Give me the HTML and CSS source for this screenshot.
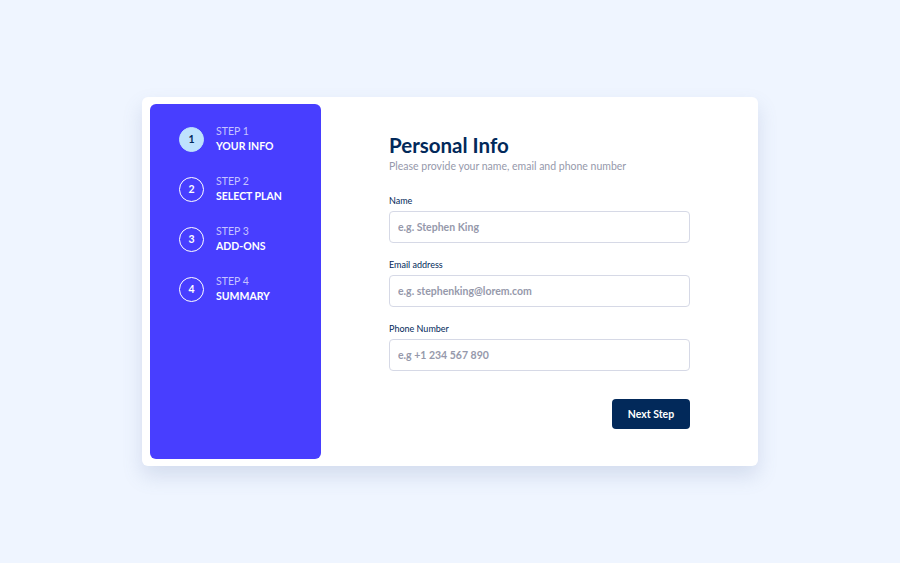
FILE: index.html
```html
<!DOCTYPE html>
<html lang="en">
<head>
<meta charset="utf-8">
<title>Multi-step form</title>
<link rel="stylesheet" href="styles.css">
</head>
<body>
<div class="card">
  <aside class="sidebar">
    <div class="step">
      <span class="num active">1</span>
      <div class="step-text"><span class="step-label">STEP 1</span><span class="step-name">YOUR INFO</span></div>
    </div>
    <div class="step">
      <span class="num">2</span>
      <div class="step-text"><span class="step-label">STEP 2</span><span class="step-name">SELECT PLAN</span></div>
    </div>
    <div class="step">
      <span class="num">3</span>
      <div class="step-text"><span class="step-label">STEP 3</span><span class="step-name">ADD-ONS</span></div>
    </div>
    <div class="step">
      <span class="num">4</span>
      <div class="step-text"><span class="step-label">STEP 4</span><span class="step-name">SUMMARY</span></div>
    </div>
  </aside>
  <main class="main">
    <h1 class="title">Personal Info</h1>
    <p class="subtitle">Please provide your name, email and phone number</p>
    <form class="form">
      <label class="field">
        <span class="label">Name</span>
        <input class="input" type="text" placeholder="e.g. Stephen King">
      </label>
      <label class="field">
        <span class="label">Email address</span>
        <input class="input" type="email" placeholder="e.g. stephenking@lorem.com">
      </label>
      <label class="field">
        <span class="label">Phone Number</span>
        <input class="input" type="tel" placeholder="e.g +1 234 567 890">
      </label>
      <div class="actions">
        <button class="next" type="button">Next Step</button>
      </div>
    </form>
  </main>
</div>
</body>
</html>
```

FILE: styles.css
```css
* { box-sizing: border-box; }
html, body { margin: 0; padding: 0; }
body {
  background: #eff5ff;
  font-family: "Lato", "Open Sans", sans-serif;
  width: 900px;
  height: 563px;
  display: flex;
  justify-content: center;
  align-items: flex-start;
  padding-top: 97px;
}
.card {
  width: 616px;
  height: 369px;
  background: #fff;
  border-radius: 6px;
  padding: 7px 8px;
  display: flex;
  box-shadow: 0 10px 20px rgba(90, 110, 160, 0.18);
}
.sidebar {
  width: 171px;
  background: #483eff;
  border-radius: 6px;
  padding: 20px 0 0 29px;
  display: flex;
  flex-direction: column;
  gap: 20px;
}
.step {
  display: flex;
  align-items: center;
  gap: 12px;
}
.num {
  width: 25px;
  height: 25px;
  border-radius: 50%;
  border: 1px solid #fff;
  color: #fff;
  font-size: 10.5px;
  font-weight: 700;
  display: flex;
  align-items: center;
  justify-content: center;
  flex-shrink: 0;
}
.num.active {
  background: #bee2fd;
  border-color: #bee2fd;
  color: #02295a;
}
.step-text {
  display: flex;
  flex-direction: column;
  line-height: 15px;
}
.step-label {
  color: #c6c3ff;
  font-size: 10.5px;
}
.step-name {
  color: #fff;
  font-size: 10.5px;
  font-weight: 700;
}
.main {
  flex: 1;
  padding: 28px 60px 0 68px;
  display: flex;
  flex-direction: column;
}
.title {
  margin: 0;
  font-size: 20.5px;
  font-weight: 700;
  color: #02295a;
  line-height: 26px;
}
.subtitle {
  margin: 0;
  font-size: 10.5px;
  color: #9699ab;
  line-height: 17px;
}
.form {
  margin-top: 20px;
  display: flex;
  flex-direction: column;
  gap: 16px;
}
.field {
  display: flex;
  flex-direction: column;
  gap: 4px;
}
.label {
  font-size: 9px;
  color: #02295a;
  line-height: 12px;
}
.input {
  height: 32px;
  border: 1px solid #d6d9e6;
  border-radius: 4px;
  padding: 0 8px;
  font-family: inherit;
  font-size: 10.5px;
  font-weight: 700;
  color: #02295a;
  outline: none;
}
.input::placeholder {
  color: #9699ab;
}
.actions {
  display: flex;
  justify-content: flex-end;
  margin-top: 12px;
}
.next {
  width: 78px;
  height: 30px;
  background: #02295a;
  color: #fff;
  border: none;
  border-radius: 4px;
  font-family: inherit;
  font-size: 10.5px;
  font-weight: 700;
}
```
